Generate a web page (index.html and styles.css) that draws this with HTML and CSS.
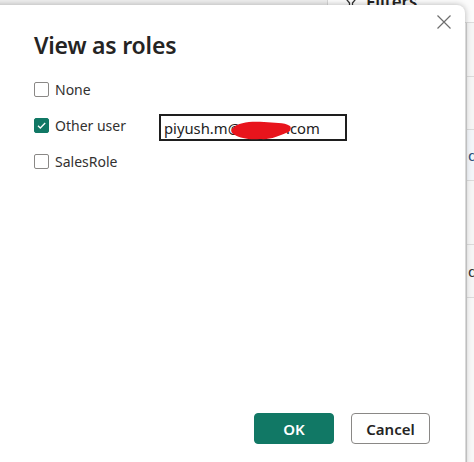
FILE: index.html
```html
<!DOCTYPE html>
<html>
<head>
<meta charset="utf-8">
<link rel="stylesheet" href="styles.css">
</head>
<body>
<div class="app">
  <div class="canvas"></div>
  <aside class="filters">
    <div class="filters-head">
      <svg class="funnel" width="14" height="14" viewBox="0 0 14 14"><path d="M1 1.5h12L8.5 7v5l-3 1.5V7z" fill="none" stroke="#333" stroke-width="1.3" stroke-linejoin="round"/></svg>
      <span>Filters</span>
    </div>
    <div class="cards">
      <div class="card h54"></div>
      <div class="card h53"></div>
      <div class="card h51 sel"><span class="ctext blue">d</span></div>
      <div class="card h64"></div>
      <div class="card h53"><span class="ctext">d</span></div>
    </div>
  </aside>
</div>

<div class="dialog">
  <button class="close" aria-label="Close">
    <svg width="16" height="16" viewBox="0 0 16 16"><path d="M1.5 1.5l13 13M14.5 1.5l-13 13" stroke="#6e6e6e" stroke-width="1.2"/></svg>
  </button>
  <h1 class="title">View as roles</h1>
  <div class="options">
    <label class="opt"><span class="box"></span><span class="lbl">None</span></label>
    <div class="opt">
      <span class="box checked"><svg width="11" height="11" viewBox="0 0 11 11"><path d="M2 5.8l2.3 2.2L9.2 3" fill="none" stroke="#fff" stroke-width="1.3"/></svg></span>
      <span class="lbl wide">Other user</span>
      <div class="email">piyush.m@<svg class="redact" width="62" height="22" viewBox="0 0 62 22"><path d="M3 9 C8 3 22 2 34 3 C44 4 54 3 60 7 C62 10 60 13 56 14 C49 17 40 21 30 20 C19 21 10 19 5 16 C1 14 0 11 3 9 Z" fill="#e8141c"/></svg>.com</div>
    </div>
    <label class="opt"><span class="box"></span><span class="lbl">SalesRole</span></label>
  </div>
  <div class="footer">
    <button class="btn primary">OK</button>
    <button class="btn">Cancel</button>
  </div>
</div>
</body>
</html>
```

FILE: styles.css
```css
html, body {
  margin: 0;
  padding: 0;
}
body {
  width: 474px;
  height: 462px;
  overflow: hidden;
  background: #efefef;
  font-family: "Noto Sans", "Open Sans", sans-serif;
  position: relative;
}
.app {
  display: grid;
  grid-template-columns: 327px 1fr;
  height: 462px;
}
.canvas {
  background: #eeeeee;
}
.filters {
  border-left: 1px solid #d6d6d6;
  background: #f7f7f7;
  overflow: hidden;
}
.filters-head {
  display: flex;
  align-items: flex-start;
  gap: 8px;
  height: 36px;
  box-sizing: border-box;
  margin-top: -13px;
  padding: 4px 0 0 16px;
  font-size: 17px;
  line-height: 22px;
  font-weight: 600;
  color: #252423;
  border-bottom: 1px solid #dcdcdc;
  background: #fbfbfb;
}
.funnel { flex: none; margin-top: 5px; }
.cards {
  display: flex;
  flex-direction: column;
  margin-left: 138px;
  border-left: 1px solid #d2d2d2;
  height: 440px;
}
.card {
  border-bottom: 1px solid #dadada;
  box-sizing: border-box;
  display: flex;
  align-items: center;
  background: #f5f5f5;
  flex: none;
}
.h54 { height: 54px; }
.h53 { height: 53px; }
.h51 { height: 51px; }
.h64 { height: 64px; }
.sel { background: #f2f5f9; }
.ctext {
  font-size: 15px;
  color: #333;
  padding-left: 1px;
}
.blue { color: #2c4f7a; }

.dialog {
  position: absolute;
  left: -20px;
  top: 5px;
  width: 485px;
  height: 480px;
  background: #fff;
  border-radius: 8px;
  box-shadow: 0 0 6px rgba(0, 0, 0, 0.28);
  box-sizing: border-box;
  padding: 0 35px 0 54px;
  display: flex;
  flex-direction: column;
}
.close {
  position: absolute;
  right: 11px;
  top: 7px;
  width: 20px;
  height: 20px;
  border: 0;
  background: none;
  padding: 2px;
  margin: 0;
}
.title {
  margin: 24px 0 0;
  font-size: 23px;
  line-height: 32px;
  font-weight: 600;
  color: #252423;
  letter-spacing: -0.2px;
}
.options {
  margin-top: 18px;
  display: flex;
  flex-direction: column;
  gap: 15px;
}
.opt {
  display: flex;
  align-items: center;
  height: 21px;
  font-size: 14px;
  color: #323130;
}
.box {
  width: 13px;
  height: 13px;
  border: 1px solid #8a8886;
  border-radius: 2px;
  box-sizing: content-box;
  display: flex;
  align-items: center;
  justify-content: center;
  flex: none;
}
.box.checked {
  background: #117865;
  border-color: #117865;
}
.lbl {
  margin-left: 6px;
}
.lbl.wide {
  width: 104px;
  flex: none;
}
.email {
  margin-top: 4px;
  width: 188px;
  height: 27px;
  box-sizing: border-box;
  border: 2px solid #1e1e1e;
  display: flex;
  align-items: center;
  padding-left: 3px;
  font-size: 14.8px;
  color: #222;
  white-space: nowrap;
  flex: none;
}
.redact {
  margin-left: -11px;
  margin-right: -6px;
  margin-top: 4px;
  flex: none;
}
.footer {
  margin-top: auto;
  margin-bottom: 41px;
  display: flex;
  justify-content: flex-end;
  gap: 17px;
}
.btn {
  width: 79px;
  height: 31px;
  border-radius: 4px;
  border: 1px solid #8a8886;
  background: #fff;
  font-family: inherit;
  font-size: 15px;
  font-weight: 600;
  color: #252423;
  padding: 0;
}
.btn.primary {
  width: 80px;
  background: #117865;
  border-color: #117865;
  color: #fff;
}
```
